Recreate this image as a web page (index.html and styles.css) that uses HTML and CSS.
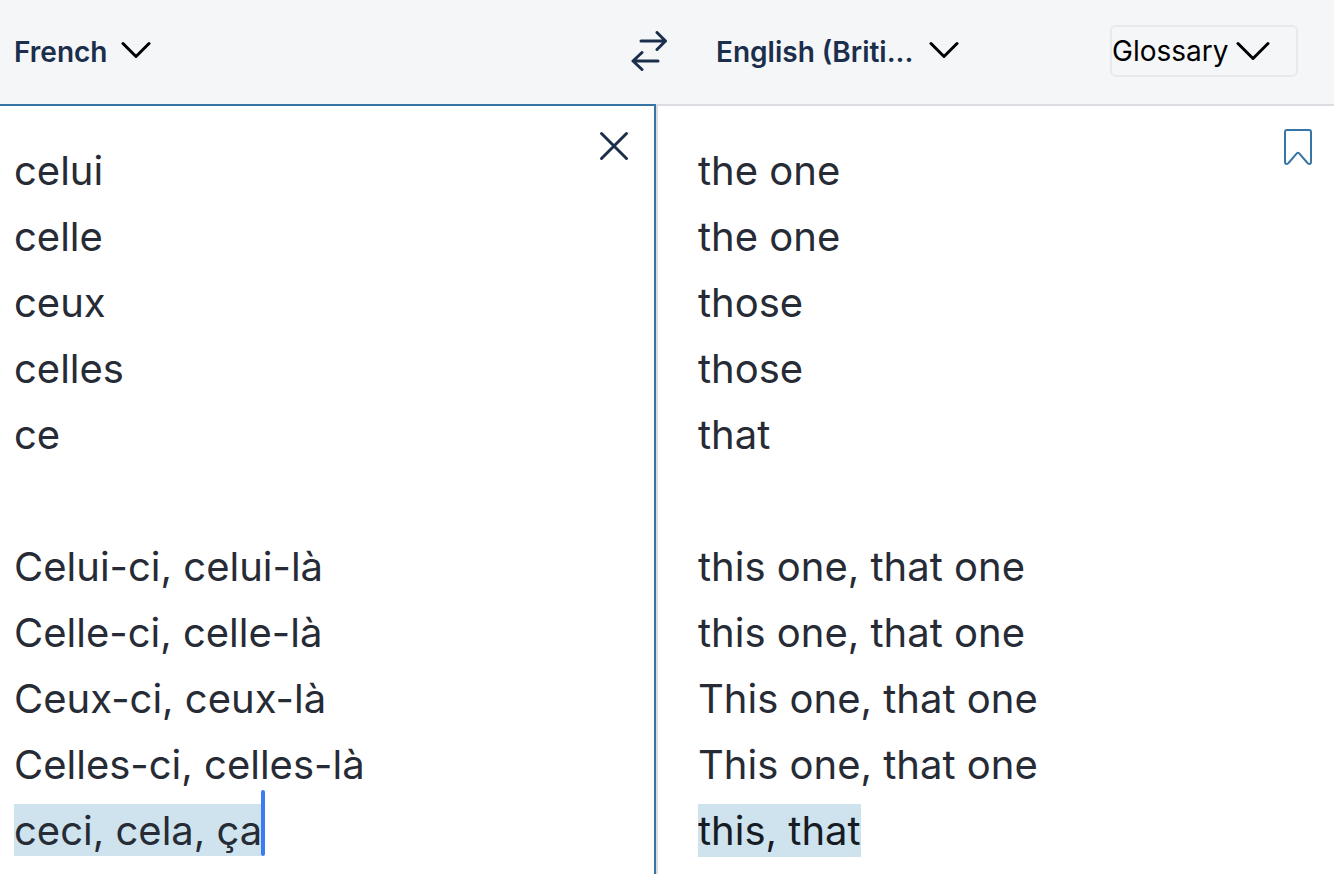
FILE: index.html
```html
<!DOCTYPE html>
<html lang="en">
<head>
<meta charset="utf-8">
<meta name="viewport" content="width=device-width, initial-scale=1">
<title>Translator</title>
<link rel="stylesheet" href="styles.css">
</head>
<body>
<main class="translator">
  <header class="toolbar">
    <div class="toolbar-half source-tools">
      <label class="language">
        <select class="language-select source-select" aria-label="Source language"><option>French</option></select>
        <svg class="chevron" width="30" height="18" viewBox="0 0 30 18" aria-hidden="true"><path d="M2 2.500 15 15.500 28 2.500"/></svg>
      </label>
      <button class="icon-button" type="button" aria-label="Swap languages">
        <svg class="swap-icon" width="36" height="40" viewBox="0 0 36 40" aria-hidden="true"><path d="M10 10H34.500M26 1.500 34.500 10 26 18.500M27 30H2M11 21.500 2 30 11 38.500"/></svg>
      </button>
    </div>
    <div class="toolbar-half target-tools">
      <label class="language">
        <select class="language-select target-select" aria-label="Target language"><option>English (Briti...</option></select>
        <svg class="chevron" width="30" height="18" viewBox="0 0 30 18" aria-hidden="true"><path d="M2 2.500 15 15.500 28 2.500"/></svg>
      </label>
      <button class="glossary" type="button" aria-haspopup="menu">Glossary
        <svg class="chevron" width="34" height="20" viewBox="0 0 34 20" aria-hidden="true"><path d="M2 2.500 17 17.500 32 2.500"/></svg>
      </button>
    </div>
  </header>
  <div class="panels">
    <section class="panel source-panel">
      <div class="editor">
        <span class="highlight" aria-hidden="true"></span>
        <textarea class="source-text" rows="11" aria-label="Source text" spellcheck="false">celui
celle
ceux
celles
ce

Celui-ci, celui-là
Celle-ci, celle-là
Ceux-ci, ceux-là
Celles-ci, celles-là
ceci, cela, ça</textarea>
      </div>
      <button class="icon-button clear" type="button" aria-label="Clear text">
        <svg width="30" height="30" viewBox="0 0 30 30" aria-hidden="true"><path d="M2.500 2.500 27.500 27.500M27.500 2.500 2.500 27.500"/></svg>
      </button>
    </section>
    <section class="panel target-panel">
      <div class="translation" aria-label="Translation">
        <p>the one</p>
        <p>the one</p>
        <p>those</p>
        <p>those</p>
        <p>that</p>
        <p><br></p>
        <p>this one, that one</p>
        <p>this one, that one</p>
        <p>This one, that one</p>
        <p>This one, that one</p>
        <p><mark>this, that</mark></p>
      </div>
      <button class="icon-button save" type="button" aria-label="Save translation">
        <svg width="30" height="38" viewBox="0 0 30 38" aria-hidden="true"><path d="M4 2H26Q28 2 28 4V34Q28 36 26 36Q25.300 36 24.500 35L16 25.200Q15 24.200 14 25.200L5.500 35Q4.700 36 4 36Q2 36 2 34V4Q2 2 4 2Z"/></svg>
      </button>
    </section>
  </div>
</main>
</body>
</html>
```
FILE: styles.css
```css
* {
  box-sizing: border-box;
}

body {
  margin: 0;
  background: #fff;
  color: #262b35;
  font-family: Inter, "Liberation Sans", sans-serif;
}

button,
select,
textarea {
  margin: 0;
  padding: 0;
  border: 0;
  background: none;
  color: inherit;
  font: inherit;
}

svg {
  display: block;
  flex: none;
  fill: none;
  stroke: currentColor;
  stroke-width: 3;
  stroke-linecap: round;
  stroke-linejoin: round;
}

.translator {
  display: flex;
  flex-direction: column;
  min-height: 100vh;
}

.toolbar {
  display: grid;
  grid-template-columns: 1fr 1fr;
  min-height: 104px;
  padding-bottom: 2px;
  background: #f5f6f8;
}

.toolbar-half {
  display: flex;
  align-items: center;
  justify-content: space-between;
  min-width: 0;
}

.source-tools {
  padding-left: 14px;
}

.target-tools {
  padding-left: 49px;
  padding-right: 36px;
}

.language {
  display: flex;
  align-items: center;
  color: #1b2e4b;
}

.language-select {
  appearance: none;
  padding-top: 2px;
  font-size: 28px;
  font-weight: 600;
  line-height: 36px;
}

.source-select {
  width: 107px;
}

.target-select {
  width: 213px;
}

.chevron {
  color: #000;
}

.language .chevron {
  margin-bottom: 2px;
  pointer-events: none;
}

.icon-button {
  display: block;
  color: #1b2e4b;
}

.glossary {
  display: flex;
  align-items: center;
  gap: 8px;
  width: 188px;
  height: 52px;
  border: 2px solid #e8e9ec;
  border-radius: 6px;
  color: #000;
  font-size: 28px;
}

.panels {
  display: grid;
  flex: 1;
  grid-template-columns: 656fr 678fr;
}

.panel {
  display: flex;
  align-items: flex-start;
  justify-content: space-between;
  min-width: 0;
  font-size: 40px;
  line-height: 66px;
}

.source-panel {
  padding: 0 25px 0 14px;
  border-top: 2px solid #3675a5;
  border-right: 2px solid #3675a5;
}

.target-panel {
  padding: 0 21px 0 40px;
  border-top: 2px solid #dcdde3;
  border-left: 2px solid #dcdde3;
}

.editor {
  position: relative;
  flex: 1;
  min-width: 0;
  margin-top: 32px;
}

.source-text {
  position: relative;
  display: block;
  width: 100%;
  outline: 0;
  overflow: hidden;
  resize: none;
}

.highlight {
  position: absolute;
  top: 666px;
  left: 0;
  width: 247px;
  height: 52px;
  background: #cee3ed;
}

.highlight::after {
  content: "";
  position: absolute;
  right: -4px;
  bottom: 0;
  width: 4px;
  height: 66px;
  border-radius: 2px;
  background: #3d7bf5;
}

.clear {
  margin-top: 25px;
}

.translation {
  flex: 1;
  margin-top: 32px;
}

.translation p {
  margin: 0;
}

.translation mark {
  padding: 2px 0;
  background: #cee3ed;
  color: #171c24;
}

.save {
  margin-top: 22px;
  color: #3675a5;
}

.save svg {
  stroke-width: 2;
}
```
